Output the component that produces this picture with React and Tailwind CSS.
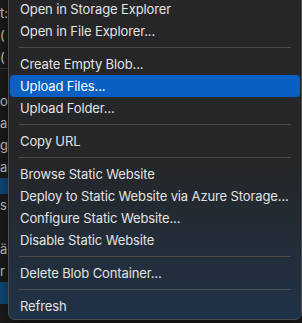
import React from "react";

const groups = [
  ["Open in Storage Explorer", "Open in File Explorer..."],
  ["Create Empty Blob...", "Upload Files...", "Upload Folder..."],
  ["Copy URL"],
  [
    "Browse Static Website",
    "Deploy to Static Website via Azure Storage...",
    "Configure Static Website...",
    "Disable Static Website",
  ],
  ["Delete Blob Container..."],
  ["Refresh"],
];

const bgRows = [
  { t: "t:", h: 22 },
  { t: "(", h: 22 },
  { t: "(", h: 22 },
  { t: "", h: 22, line: true },
  { t: "o", h: 22 },
  { t: "a", h: 22 },
  { t: "g", h: 22 },
  { t: "ai", h: 22 },
  { t: "", h: 16, blue: true },
  { t: "s", h: 22 },
  { t: "", h: 22 },
  { t: "ä", h: 22 },
  { t: "r", h: 22 },
  { t: "", h: 22, blue: true },
];

export default function App() {
  return (
    <div
      className="relative w-[302px] h-[323px] overflow-hidden bg-[#1b1b1c]"
      style={{ fontFamily: "Inter, 'Noto Sans', sans-serif" }}
    >
      {/* background editor strip */}
      <div className="flex flex-col pt-[2px] text-[13px] text-[#c8c8c8] leading-none">
        {bgRows.map((r, i) => (
          <div
            key={i}
            className={
              "flex items-center " +
              (r.blue ? "bg-[#0d4a7a] " : "") +
              (r.line ? "border-t border-[#3a3a3a] " : "")
            }
            style={{ height: r.h }}
          >
            {r.t}
          </div>
        ))}
      </div>

      {/* context menu */}
      <div className="absolute left-[8px] top-[-6px] w-[294px] rounded-[7px] border border-[#4e4e50] bg-gradient-to-b from-[#262628] via-[#252628] to-[#1f3247] pt-[3px] pb-[2px] px-px shadow-[0_4px_16px_rgba(0,0,0,0.5)]">
        {groups.map((g, gi) => (
          <div key={gi} className="flex flex-col">
            {gi > 0 && (
              <div className="h-[11px] flex items-center px-[9px]">
                <div className="h-px w-full bg-[#4b4b4d]" />
              </div>
            )}
            {g.map((item) => {
              const active = item === "Upload Files...";
              return (
                <div
                  key={item}
                  className={
                    "h-[22px] flex items-center pl-[10px] pt-px rounded-[4px] text-[13px] tracking-[-0.12px] whitespace-nowrap " +
                    (active ? "bg-[#0a60c2] text-white" : "text-[#e3e3e3]")
                  }
                >
                  {item}
                </div>
              );
            })}
          </div>
        ))}
      </div>
    </div>
  );
}
